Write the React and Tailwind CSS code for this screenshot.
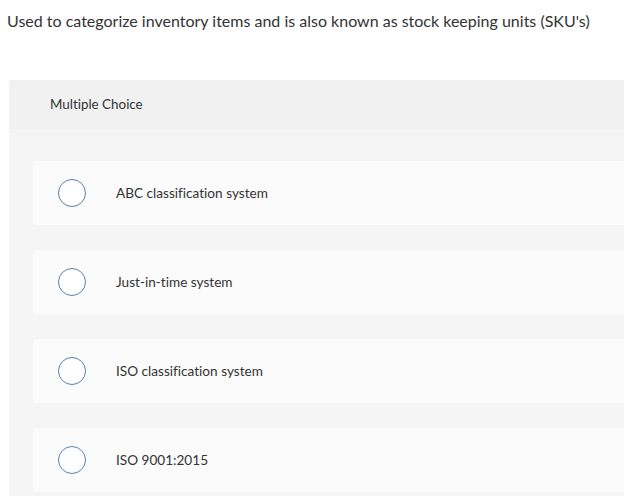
import React from "react";

const options = [
  "ABC classification system",
  "Just-in-time system",
  "ISO classification system",
  "ISO 9001:2015",
];

export default function App() {
  return (
    <div
      className="w-[624px] h-[496px] overflow-hidden bg-white text-[#333333] [font-variant-ligatures:none]"
      style={{ fontFamily: "Lato, 'Open Sans', sans-serif" }}
    >
      <p className="pt-[9px] pl-[7px] text-[16px] leading-[24px]">
        Used to categorize inventory items and is also known as stock keeping units (SKU's)
      </p>
      <div className="mt-[47px] ml-[9px] rounded-tl-[3px] bg-[#f5f5f5] pb-[10px]">
        <div className="h-[49px] flex items-center pl-[41px] bg-[#f1f1f1] rounded-tl-[3px] text-[13.4px]">
          Multiple Choice
        </div>
        <div className="pt-[32px] pl-[24px] flex flex-col gap-[25px]">
          {options.map((o) => (
            <div
              key={o}
              className="h-[64px] bg-[#fbfbfb] rounded-l-[3px] flex items-center pl-[25px]"
            >
              <span className="w-[28px] h-[28px] rounded-full border-[1.5px] border-[#5a80aa] bg-white shrink-0" />
              <span className="ml-[30px] text-[13.6px]">{o}</span>
            </div>
          ))}
        </div>
      </div>
    </div>
  );
}
